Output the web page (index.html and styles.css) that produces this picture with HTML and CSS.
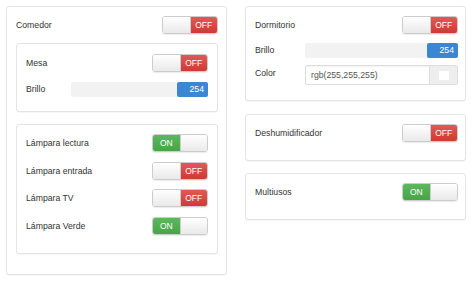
FILE: index.html
```html
<!DOCTYPE html>
<html lang="es">
<head>
    <meta charset="UTF-8">
    <meta name="viewport" content="width=device-width, initial-scale=1.0">
    <title>Casa</title>
    <link rel="stylesheet" href="styles.css">
</head>
<body>
<div class="col">
    <div class="panel outer">
        <div class="row">
            <span class="label">Comedor</span>
            <div class="switch off"><span class="blank"></span><span class="state">OFF</span></div>
        </div>
        <div class="panel inner first">
            <div class="row">
                <span class="label">Mesa</span>
                <div class="switch off"><span class="blank"></span><span class="state">OFF</span></div>
            </div>
            <div class="row gap">
                <span class="label narrow">Brillo</span>
                <div class="slider"><span class="value">254</span></div>
            </div>
        </div>
        <div class="panel inner second">
            <div class="row">
                <span class="label">Lámpara lectura</span>
                <div class="switch on"><span class="state">ON</span><span class="blank"></span></div>
            </div>
            <div class="row lamp">
                <span class="label">Lámpara entrada</span>
                <div class="switch off"><span class="blank"></span><span class="state">OFF</span></div>
            </div>
            <div class="row lamp">
                <span class="label">Lámpara TV</span>
                <div class="switch off"><span class="blank"></span><span class="state">OFF</span></div>
            </div>
            <div class="row lamp">
                <span class="label">Lámpara Verde</span>
                <div class="switch on"><span class="state">ON</span><span class="blank"></span></div>
            </div>
        </div>
    </div>
</div>
<div class="col right">
    <div class="panel side bedroom">
        <div class="row">
            <span class="label">Dormitorio</span>
            <div class="switch off"><span class="blank"></span><span class="state">OFF</span></div>
        </div>
        <div class="row brillo">
            <span class="label wide">Brillo</span>
            <div class="slider"><span class="value">254</span></div>
        </div>
        <div class="row color">
            <span class="label wide">Color</span>
            <div class="color-input">
                <span class="color-text">rgb(255,255,255)</span>
                <span class="addon"><i class="swatch"></i></span>
            </div>
        </div>
    </div>
    <div class="panel side single dehum">
        <div class="row">
            <span class="label">Deshumidificador</span>
            <div class="switch off"><span class="blank"></span><span class="state">OFF</span></div>
        </div>
    </div>
    <div class="panel side single">
        <div class="row">
            <span class="label">Multiusos</span>
            <div class="switch on"><span class="state">ON</span><span class="blank"></span></div>
        </div>
    </div>
</div>
</body>
</html>
```

FILE: styles.css
```css
body {
    font-family: "Liberation Sans", Arial, sans-serif;
    font-size: 8.7px;
    color: #333;
    background: #fff;
    margin: 0;
    padding: 6px;
    display: flex;
    gap: 18px;
}
.col {
    width: 221px;
    display: flex;
    flex-direction: column;
    gap: 12px;
}
.panel {
    border: 1px solid #e4e4e4;
    border-radius: 3px;
    box-shadow: 0 1px 1px rgba(0, 0, 0, 0.04);
    background: #fff;
}
.outer {
    height: 269px;
    padding: 9px 8px 0 9px;
    box-sizing: border-box;
}
.inner {
    padding: 10px 9px 13px 9px;
}
.inner.first {
    margin-top: 9px;
}
.inner.second {
    margin-top: 12px;
    padding-top: 9px;
    padding-bottom: 18px;
}
.side {
    padding: 9px 7px 0 9px;
}
.bedroom {
    height: 95px;
    box-sizing: border-box;
}
.single {
    height: 47px;
    box-sizing: border-box;
}
.dehum {
    margin-top: 1px;
}
.row {
    display: flex;
    align-items: center;
    justify-content: space-between;
    height: 18px;
}
.row.gap {
    margin-top: 8px;
}
.row.lamp {
    margin-top: 9.5px;
}
.row.brillo {
    margin-top: 7px;
}
.row.color {
    margin-top: 6px;
    height: 20px;
    align-items: flex-start;
}
.row.color .label {
    line-height: 16px;
}
.label {
    flex: none;
}
.label.narrow {
    width: 45px;
}
.label.wide {
    width: 50px;
}
.switch {
    width: 54px;
    height: 16px;
    border: 1px solid #ccc;
    border-radius: 3px;
    display: flex;
    overflow: hidden;
    box-shadow: 0 1px 1px rgba(0, 0, 0, 0.08);
    flex: none;
}
.switch span {
    width: 50%;
    display: flex;
    align-items: center;
    justify-content: center;
}
.blank {
    background: linear-gradient(#fff, #e9e9e9);
}
.state {
    color: #fff;
    font-size: 8.5px;
}
.off .state {
    background: linear-gradient(#e05a55, #cf3a35);
}
.off .blank {
    border-right: 1px solid #ccc;
}
.on .state {
    background: linear-gradient(#5cb85c, #47a447);
}
.on .blank {
    border-left: 1px solid #ccc;
}
.slider {
    flex: 1;
    height: 15px;
    background: #f2f2f2;
    border-radius: 2px;
    display: flex;
    justify-content: flex-end;
}
.value {
    width: 31px;
    background: #3b87d2;
    color: #fff;
    border-radius: 2px;
    display: flex;
    align-items: center;
    justify-content: flex-end;
    padding-right: 4px;
    box-sizing: border-box;
}
.color-input {
    flex: 1;
    height: 20px;
    border: 1px solid #ddd;
    border-radius: 2px;
    display: flex;
    box-sizing: border-box;
    box-shadow: inset 0 1px 1px rgba(0, 0, 0, 0.05);
}
.color-text {
    flex: 1;
    padding-left: 5px;
    line-height: 18px;
    color: #555;
}
.addon {
    width: 27px;
    background: #eee;
    border-left: 1px solid #ddd;
    display: flex;
    align-items: center;
    justify-content: center;
}
.swatch {
    width: 10px;
    height: 9px;
    background: #fff;
}
```
